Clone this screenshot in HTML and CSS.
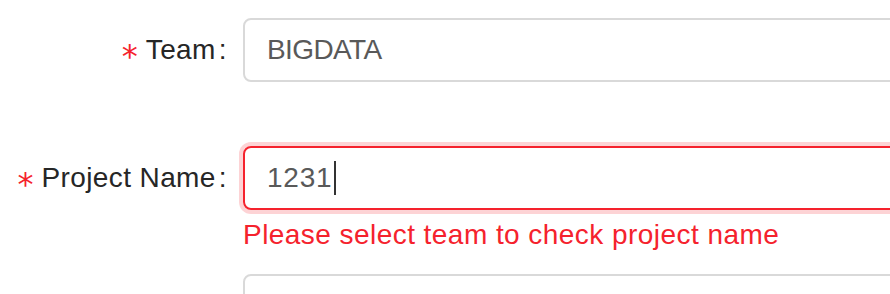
FILE: index.html
```html
<!DOCTYPE html>
<html>
<head>
<meta charset="utf-8">
<link rel="stylesheet" href="styles.css">
</head>
<body>
<form class="form">
  <div class="item">
    <div class="label"><span class="req">*</span>Team<span class="colon">:</span></div>
    <div class="control">
      <div class="input"><span class="value">BIGDATA</span></div>
    </div>
  </div>
  <div class="item with-help">
    <div class="label"><span class="req">*</span>Project Name<span class="colon">:</span></div>
    <div class="control">
      <div class="input error"><span class="value num">1231</span><span class="caret"></span></div>
      <div class="explain">Please select team to check project name</div>
    </div>
  </div>
  <div class="item">
    <div class="label"></div>
    <div class="control">
      <div class="input"></div>
    </div>
  </div>
</form>
</body>
</html>
```
FILE: styles.css
```css
html, body {
  margin: 0;
  padding: 0;
  background: #ffffff;
  overflow: hidden;
}
body {
  font-family: "Liberation Sans", Arial, sans-serif;
  width: 890px;
  height: 294px;
}
.form {
  padding-top: 10px;
}
.item {
  display: flex;
  align-items: flex-start;
  margin-bottom: 48px;
}
.item.with-help {
  margin-bottom: 10px;
}
.label {
  width: 243px;
  flex: none;
  height: 80px;
  display: flex;
  align-items: center;
  justify-content: flex-end;
  font-size: 28px;
  letter-spacing: 0.4px;
  color: #262626;
  white-space: nowrap;
}
.req {
  color: #f5222d;
  font-family: "DejaVu Sans", sans-serif;
  font-size: 32px;
  letter-spacing: 0;
  margin-right: 8px;
  position: relative;
  top: 6px;
}
.colon {
  margin: 0 16px 0 3px;
}
.control {
  width: 760px;
  flex: none;
}
.input {
  box-sizing: border-box;
  margin-top: 8px;
  height: 64px;
  width: 760px;
  border: 2px solid #d9d9d9;
  border-radius: 8px;
  padding: 0 22px;
  display: flex;
  align-items: center;
  font-size: 28px;
  color: #595959;
}
.input.error {
  border-color: #f5222d;
  box-shadow: 0 0 0 4px rgba(245, 34, 45, 0.2);
}
.value {
  letter-spacing: -0.6px;
}
.value.num {
  letter-spacing: 0.8px;
}
.caret {
  display: inline-block;
  width: 2px;
  height: 34px;
  background: #333333;
  margin-left: 1px;
}
.explain {
  margin-top: 4px;
  height: 42px;
  line-height: 42px;
  font-size: 28px;
  letter-spacing: 0.45px;
  color: #f5222d;
  white-space: nowrap;
}
```
